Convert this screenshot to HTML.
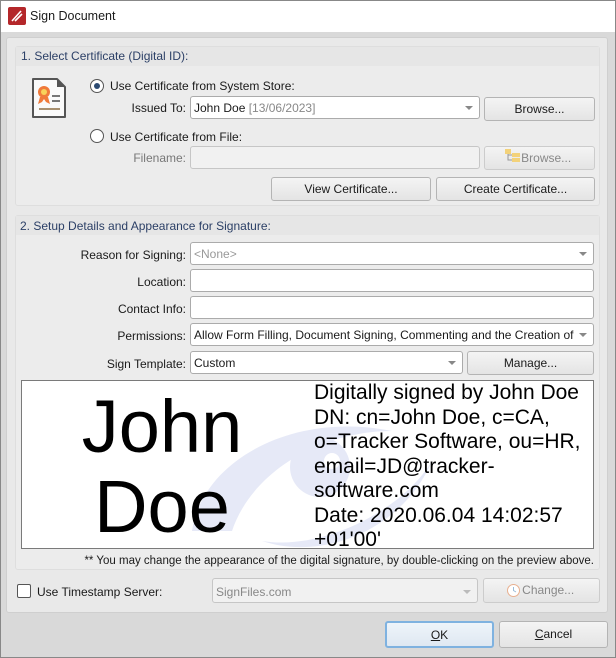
<!DOCTYPE html>
<html><head><meta charset="utf-8"><style>
*{box-sizing:border-box;margin:0;padding:0}
body{width:616px;height:658px;overflow:hidden;background:#d9d9d9;font-family:"Liberation Sans",sans-serif;font-size:12px;color:#1a1a1a;position:relative}
.a{position:absolute}
.win{left:0;top:0;width:616px;height:658px;border:1px solid #888;}
.title{left:1px;top:1px;width:614px;height:31px;background:#fff}
.panel{left:6px;top:37px;width:602px;height:576px;background:#e9e9e9;border:1px solid #cfcfcf;border-radius:3px}
.grp{background:#ececec;border:1px solid #dedede;border-radius:3px}
.gh{color:#2b3f66;font-size:12px}
.field{background:#fff;border:1px solid #ababab;border-radius:3px;height:23px;padding:4px 3px;white-space:nowrap;overflow:hidden}
.dis{background:#f1f1f1;border-color:#c6c6c6}
.btn{background:linear-gradient(#f4f4f4,#e4e4e4);border:1px solid #b4b4b4;border-radius:3px;text-align:center;line-height:22px;height:24px}
.lbl{text-align:right}
.arr{position:absolute;right:6px;top:9px;width:0;height:0;border-left:4px solid transparent;border-right:4px solid transparent;border-top:4px solid #888}
.radio{width:14px;height:14px;border-radius:50%;border:1px solid #555;background:#fff}
</style></head><body>
<div class="a win"></div>
<div class="a title"></div>
<svg class="a" style="left:8px;top:7px" width="18" height="18"><rect x="0" y="0" width="18" height="18" rx="2" fill="#b4272a"/><path d="M4 14 L13 4 M7 14 L14 7" stroke="#fff" stroke-width="1.6"/></svg>
<div class="a" style="left:30px;top:9px;font-size:12.5px">Sign Document</div>
<div class="a panel"></div>

<div class="a grp" style="left:15px;top:46px;width:585px;height:160px"></div>
<div class="a" style="left:16px;top:47px;width:583px;height:19px;background:#e6e6e6"></div>
<div class="a gh" style="left:21px;top:49px">1. Select Certificate (Digital ID):</div>
<svg class="a" style="left:31px;top:77px" width="36" height="44"><path d="M2 2 H26 L34 10 V40 H2 Z" fill="#fafafa" stroke="#555" stroke-width="2" stroke-linejoin="round"/><path d="M26 2 L34 10 L26 10Z" fill="#555"/><circle cx="13" cy="15" r="6" fill="#f07a3a"/><circle cx="13" cy="15" r="3" fill="#f8d25a"/><path d="M9 20 L7 27 L11 25 L13 22 L15 25 L19 27 L17 20Z" fill="#f07a3a"/><rect x="21" y="18" width="8" height="2" fill="#777"/><rect x="21" y="23" width="8" height="2" fill="#777"/><rect x="8" y="31" width="21" height="2" fill="#a89070"/></svg>
<div class="a radio" style="left:90px;top:79px"></div><div class="a" style="left:94px;top:83px;width:6px;height:6px;border-radius:50%;background:#2c4a72"></div>
<div class="a" style="left:110px;top:79px">Use Certificate from System Store:</div>
<div class="a lbl" style="left:100px;top:101px;width:86px">Issued To:</div>
<div class="a field" style="left:190px;top:96px;width:290px">John Doe <span style="color:#888">[13/06/2023]</span><span class="arr"></span></div>
<div class="a btn" style="left:484px;top:97px;width:111px">Browse...</div>
<div class="a radio" style="left:90px;top:129px"></div>
<div class="a" style="left:110px;top:130px">Use Certificate from File:</div>
<div class="a lbl" style="left:100px;top:151px;width:86px;color:#777">Filename:</div>
<div class="a field dis" style="left:190px;top:146px;width:290px"></div>
<div class="a btn" style="left:484px;top:146px;width:111px;color:#888;border-color:#ccc">&nbsp;&nbsp;&nbsp;&nbsp;Browse...</div>
<svg class="a" style="left:505px;top:149px" width="16" height="14"><rect x="0" y="0" width="6" height="5" fill="#f3d27a"/><rect x="7" y="4" width="8" height="4" fill="#f3d27a"/><rect x="7" y="9" width="8" height="4" fill="#f3d27a"/><path d="M3 5 V11 H7 M3 6 H7" stroke="#999" fill="none"/></svg>
<div class="a btn" style="left:271px;top:177px;width:160px">View Certificate...</div>
<div class="a btn" style="left:436px;top:177px;width:159px">Create Certificate...</div>

<div class="a grp" style="left:15px;top:215px;width:585px;height:355px"></div>
<div class="a" style="left:16px;top:216px;width:583px;height:19px;background:#e6e6e6"></div>
<div class="a gh" style="left:20px;top:219px">2. Setup Details and Appearance for Signature:</div>
<div class="a lbl" style="left:40px;top:248px;width:146px">Reason for Signing:</div>
<div class="a field" style="left:190px;top:242px;width:404px;color:#999">&lt;None&gt;<span class="arr"></span></div>
<div class="a lbl" style="left:40px;top:275px;width:146px">Location:</div>
<div class="a field" style="left:190px;top:269px;width:404px"></div>
<div class="a lbl" style="left:40px;top:302px;width:146px">Contact Info:</div>
<div class="a field" style="left:190px;top:296px;width:404px"></div>
<div class="a lbl" style="left:40px;top:329px;width:146px">Permissions:</div>
<div class="a field" style="left:190px;top:323px;width:404px">Allow Form Filling, Document Signing, Commenting and the Creation of<span class="arr" style="background:#fff;box-shadow:0 0 0 4px #fff"></span></div>
<div class="a lbl" style="left:40px;top:357px;width:146px">Sign Template:</div>
<div class="a field" style="left:190px;top:351px;width:273px">Custom<span class="arr"></span></div>
<div class="a btn" style="left:467px;top:351px;width:127px">Manage...</div>

<div class="a" style="left:21px;top:380px;width:573px;height:169px;background:#fff;border:1px solid #7a7a7a;overflow:hidden">
<svg class="a" style="left:150px;top:20px" width="300" height="150"><path d="M20 130 C30 60 120 10 220 30 C150 30 80 70 60 130 Z" fill="#e6e9f7"/><path d="M90 140 C150 150 230 110 260 60 C230 130 150 160 90 140Z" fill="#e6e9f7"/><circle cx="148" cy="66" r="30" fill="#e6e9f7"/><circle cx="160" cy="60" r="8" fill="#fff"/></svg>
<div class="a" style="left:40px;top:6px;width:200px;text-align:center;font-size:74px;line-height:80px;color:#000">John<br>Doe</div>
<div class="a" style="left:292px;top:0px;font-size:21px;line-height:24.5px;color:#000;white-space:nowrap">Digitally signed by John Doe<br>DN: cn=John Doe, c=CA,<br>o=Tracker Software, ou=HR,<br>email=JD@tracker-<br>software.com<br>Date: 2020.06.04 14:02:57<br>+01'00'</div>
</div>
<div class="a" style="left:60px;top:555px;width:534px;text-align:right;font-size:11.5px">** You may change the appearance of the digital signature, by double-clicking on the preview above.</div>

<div class="a" style="left:17px;top:584px;width:14px;height:14px;border:1px solid #555;background:#fff;border-radius:2px"></div>
<div class="a" style="left:37px;top:585px">Use Timestamp Server:</div>
<div class="a field dis" style="left:212px;top:578px;width:266px;height:25px;padding-top:6px;color:#888">SignFiles.com<span class="arr" style="top:11px;border-top-color:#bbb"></span></div>
<div class="a btn" style="left:483px;top:578px;width:117px;height:25px;color:#888;border-color:#ccc">&nbsp;&nbsp;&nbsp;&nbsp;Change...</div>
<svg class="a" style="left:506px;top:583px" width="15" height="15"><circle cx="7.5" cy="7.5" r="6" fill="#fff" stroke="#e8b090"/><path d="M7.5 4 V7.5 L10 9" stroke="#9bbbd8" fill="none"/></svg>

<div class="a btn" style="left:385px;top:621px;width:109px;height:27px;line-height:25px;border:2px solid #7fb2e0;background:linear-gradient(#eef4fa,#dfe8f2)"><u>O</u>K</div>
<div class="a btn" style="left:499px;top:621px;width:109px;height:27px;line-height:25px"><u>C</u>ancel</div>
</body></html>
